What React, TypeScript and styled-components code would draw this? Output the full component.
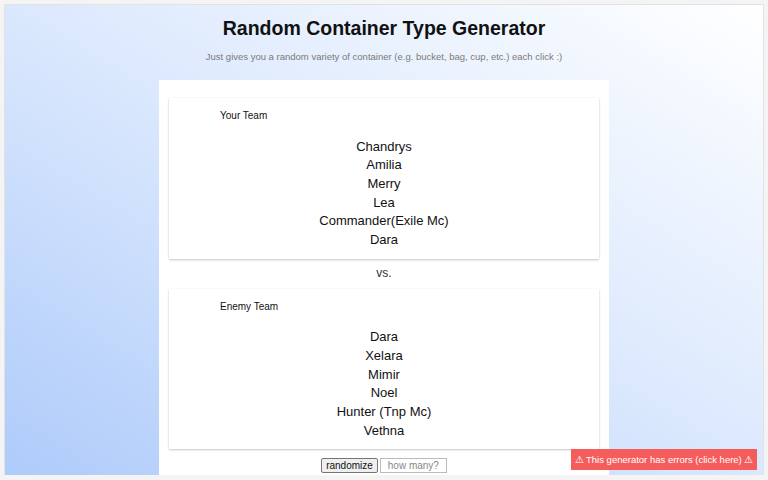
import styled, { createGlobalStyle } from "styled-components";

const GlobalStyle = createGlobalStyle`
  html, body {
    margin: 0;
    padding: 0;
    background: #f4f4f4;
    font-family: "Liberation Sans", Arial, sans-serif;
    overflow: hidden;
  }
`;

const yourTeam = ["Chandrys", "Amilia", "Merry", "Lea", "Commander(Exile Mc)", "Dara"];
const enemyTeam = ["Dara", "Xelara", "Mimir", "Noel", "Hunter (Tnp Mc)", "Vethna"];

function TeamCard({ title, members }: { title: string; members: string[] }) {
  return (
    <Card>
      <CardLabel>{title}</CardLabel>
      <NameList>
        {members.map((m, i) => (
          <Name key={i}>{m}</Name>
        ))}
      </NameList>
    </Card>
  );
}

export default function App() {
  return (
    <>
      <GlobalStyle />
      <Frame>
        <Title>Random Container Type Generator</Title>
        <Subtitle>
          Just gives you a random variety of container (e.g. bucket, bag, cup, etc.) each click :)
        </Subtitle>
        <Panel>
          <TeamCard title="Your Team" members={yourTeam} />
          <Versus>vs.</Versus>
          <TeamCard title="Enemy Team" members={enemyTeam} />
          <Controls>
            <RandomButton>randomize</RandomButton>
            <CountInput placeholder="how many?" />
          </Controls>
        </Panel>
      </Frame>
      <ErrorBadge>⚠ This generator has errors (click here) ⚠</ErrorBadge>
    </>
  );
}

const Frame = styled.div`
  margin: 4px 4px 0 4px;
  height: 471px;
  box-sizing: border-box;
  border: 1px solid #e2e2e2;
  border-bottom: none;
  overflow: hidden;
  background: linear-gradient(to top right, #aecbfa 0%, #d9e7fd 48%, #ffffff 100%);
  display: flex;
  flex-direction: column;
  align-items: center;
`;

const Title = styled.h1`
  margin: 12px 0 0;
  font-size: 19.5px;
  line-height: 23px;
  font-weight: bold;
  color: #111;
`;

const Subtitle = styled.p`
  margin: 11px 0 0;
  font-size: 9.5px;
  line-height: 12px;
  color: #7a7a7a;
`;

const Panel = styled.div`
  margin-top: 17px;
  width: 450px;
  flex: 1;
  box-sizing: border-box;
  background: #fff;
  padding: 18px 10px 0;
  display: flex;
  flex-direction: column;
  align-items: stretch;
`;

const Card = styled.div`
  background: #fff;
  box-shadow: 0 1px 2px rgba(0, 0, 0, 0.22), 0 0 1px rgba(0, 0, 0, 0.06);
  padding: 12px 0 9px;
`;

const CardLabel = styled.div`
  padding-left: 51px;
  font-size: 10px;
  line-height: 12px;
  color: #111;
`;

const NameList = styled.div`
  margin-top: 15.5px;
  display: flex;
  flex-direction: column;
  align-items: center;
`;

const Name = styled.div`
  font-size: 13px;
  line-height: 18.7px;
  color: #111;
`;

const Versus = styled.div`
  margin: 7px 0 9px;
  text-align: center;
  font-size: 12px;
  line-height: 14px;
  color: #333;
`;

const Controls = styled.div`
  margin-top: 9px;
  display: flex;
  justify-content: center;
  gap: 2px;
`;

const RandomButton = styled.button`
  font-family: "Liberation Sans", Arial, sans-serif;
  font-size: 10px;
  height: 15px;
  padding: 0 4px;
  border: 1px solid #767676;
  border-radius: 2px;
  background: #efefef;
  color: #111;
`;

const CountInput = styled.input`
  font-family: "Liberation Sans", Arial, sans-serif;
  font-size: 10px;
  height: 15px;
  width: 67px;
  box-sizing: border-box;
  padding: 0 2px;
  border: 1px solid #bbb;
  text-align: center;
  &::placeholder {
    color: #888;
  }
`;

const ErrorBadge = styled.div`
  position: fixed;
  right: 11px;
  bottom: 10px;
  width: 186px;
  height: 21px;
  display: flex;
  align-items: center;
  justify-content: center;
  background: #f55d5d;
  color: #fff;
  font-size: 9.5px;
  white-space: nowrap;
`;
